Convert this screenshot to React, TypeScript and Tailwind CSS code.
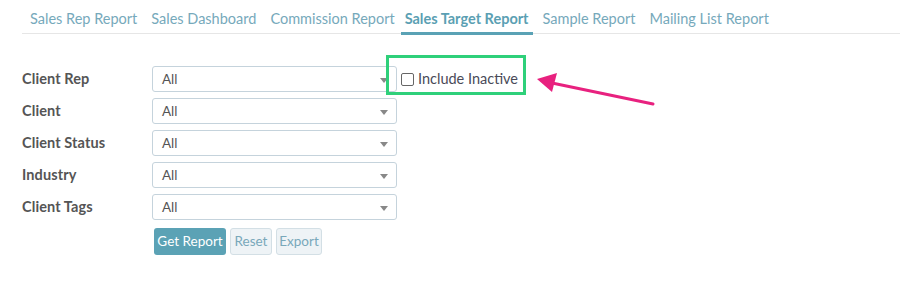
import React from "react";

const tabs = [
  "Sales Rep Report",
  "Sales Dashboard",
  "Commission Report",
  "Sales Target Report",
  "Sample Report",
  "Mailing List Report",
];

const rows = ["Client Rep", "Client", "Client Status", "Industry", "Client Tags"];

function Select() {
  return (
    <div className="relative w-[245px] h-[26px] border border-[#c5d3dc] rounded-[3px] bg-white flex items-center pl-[9px] text-[13.5px] text-[#555]">
      All
      <span className="absolute right-[8px] top-[11px] w-0 h-0 border-l-[4px] border-r-[4px] border-t-[5px] border-l-transparent border-r-transparent border-t-[#888]" />
    </div>
  );
}

export default function App() {
  return (
    <div
      className="relative w-[900px] h-[288px] bg-white overflow-hidden"
      style={{ fontFamily: "Lato, 'Open Sans', sans-serif" }}
    >
      <div className="ml-[22px] mt-[8px] flex border-b border-[#e6e6e6] h-[26px] pl-[1px]">
        {tabs.map((t) => {
          const active = t === "Sales Target Report";
          return (
            <div
              key={t}
              className={
                "h-[26px] text-[14.5px] leading-[22px] " +
                (active
                  ? "font-bold text-[#5b9fb3] border-b-[3px] border-[#5aa2b5] mb-[-1px] h-[27px] px-[4px] mr-[3px] ml-[-1px]"
                  : "text-[#76a9bb] px-[7px]")
              }
            >
              {t}
            </div>
          );
        })}
      </div>

      <div className="ml-[22px] mt-[32px] flex flex-col gap-[6px]">
        {rows.map((r, i) => (
          <div key={r} className="flex items-center">
            <div className="w-[130px] text-[14.5px] font-bold text-[#555] tracking-[0.1px]">{r}</div>
            <Select />
            {i === 0 && (
              <label className="flex items-center ml-[4px] text-[14.5px] text-[#4a4a58]">
                <span className="w-[13px] h-[13px] border border-[#666] rounded-[2px] bg-white mr-[4px]" />
                Include Inactive
              </label>
            )}
          </div>
        ))}
        <div className="flex gap-[4px] ml-[132px] mt-[2px]">
          <button className="h-[27px] w-[72px] rounded-[3px] bg-[#5ba2b5] text-white text-[13.5px]">
            Get Report
          </button>
          <button className="h-[27px] w-[42px] rounded-[3px] bg-[#eef3f6] border border-[#d3dfe5] text-[#79a8ba] text-[13.5px]">
            Reset
          </button>
          <button className="h-[27px] w-[46px] rounded-[3px] bg-[#eef3f6] border border-[#d3dfe5] text-[#79a8ba] text-[13.5px]">
            Export
          </button>
        </div>
      </div>

      <div className="absolute left-[386px] top-[55px] w-[140px] h-[40px] border-[3px] border-[#2fd07a]" />

      <svg className="absolute left-0 top-0" width="900" height="288">
        <line x1="653" y1="104" x2="552" y2="83" stroke="#e8217f" strokeWidth="3" strokeLinecap="round" />
        <polygon points="537,79 557,73 552,92" fill="#e8217f" />
      </svg>
    </div>
  );
}
